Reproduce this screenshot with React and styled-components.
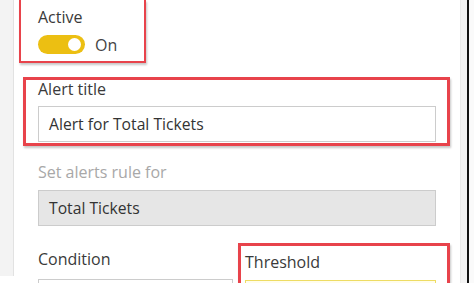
import React from "react";
import styled, { createGlobalStyle } from "styled-components";

const Global = createGlobalStyle`
  html, body { margin: 0; padding: 0; background: #ffffff; overflow: hidden; }
  body { font-family: "Open Sans", "Noto Sans", sans-serif; }
  * { box-sizing: border-box; }
`;

const RED = "#e8434b";

const Page = styled.div`
  display: flex;
  width: 474px;
  height: 283px;
  overflow: hidden;
  background: #ffffff;
`;

const LeftRail = styled.div`
  width: 14px;
  height: 276px;
  flex: none;
  background: #f3f3f3;
  border-right: 1px solid #e2e2e2;
`;

const Panel = styled.div`
  flex: 1;
  display: flex;
  flex-direction: column;
  align-items: flex-start;
  min-width: 0;
  & > * { flex-shrink: 0; }
`;

const RightRail = styled.div`
  width: 7px;
  flex: none;
  background: #f4f4f4;
  border-left: 1px solid #ececec;
`;

const RightEdge = styled.div`
  width: 7px;
  flex: none;
  border-left: 2px solid #141414;
  background: #fafafa;
`;

const ActiveBox = styled.div`
  margin-left: 5px;
  width: 127px;
  height: 63px;
  border: 2px solid ${RED};
  border-top: none;
  box-shadow: 1px 2px 2px rgba(0, 0, 0, 0.22);
  padding: 8px 0 0 17px;
  display: flex;
  flex-direction: column;
  gap: 9px;
`;

const HighlightBox = styled.div`
  border: 3px solid ${RED};
  box-shadow: 1px 2px 2px rgba(0, 0, 0, 0.22);
  display: flex;
  flex-direction: column;
  flex-shrink: 0;
  gap: ${(p) => p.$gap}px;
  padding: ${(p) => p.$padding};
  margin: ${(p) => p.$margin};
  width: ${(p) => p.$width}px;
`;

const Label = styled.div`
  font-size: 16px;
  line-height: 18px;
  color: ${(p) => (p.$muted ? "#a8a8a8" : "#3a3a3a")};
  white-space: nowrap;
`;

const ToggleRow = styled.div`
  display: flex;
  align-items: center;
  gap: 10px;
`;

const Toggle = styled.div`
  width: 47px;
  height: 19px;
  border-radius: 10px;
  background: #ecbf12;
  display: flex;
  align-items: center;
  justify-content: flex-end;
  padding-right: 4px;
`;

const Knob = styled.div`
  width: 13px;
  height: 13px;
  border-radius: 50%;
  background: #ffffff;
`;

const ToggleText = styled.span`
  font-size: 16px;
  line-height: 18px;
  color: #444444;
`;

const Input = styled.div`
  width: ${(p) => p.$width}px;
  height: 36px;
  flex: none;
  border: 1px solid ${(p) => (p.$focus ? "#eedc63" : "#cccccc")};
  background: ${(p) => (p.$disabled ? "#e6e6e6" : p.$focus ? "#fffdec" : "#ffffff")};
  padding-left: 10px;
  display: flex;
  align-items: center;
  font-size: 15.7px;
  color: #333333;
  white-space: nowrap;
`;

const Field = styled.div`
  display: flex;
  flex-direction: column;
  flex-shrink: 0;
  gap: ${(p) => p.$gap}px;
  margin: ${(p) => p.$margin};
`;

const Row = styled.div`
  display: flex;
  align-items: flex-start;
  gap: 5px;
  margin: 17px 0 0 24px;
`;

export default function App() {
  return (
    <>
      <Global />
      <Page>
        <LeftRail />
        <Panel>
          <ActiveBox>
            <Label>Active</Label>
            <ToggleRow>
              <Toggle>
                <Knob />
              </Toggle>
              <ToggleText>On</ToggleText>
            </ToggleRow>
          </ActiveBox>

          <HighlightBox $margin="14px 0 0 9px" $width={427} $padding="0 11px 1px 12px" $gap={8}>
            <Label>Alert title</Label>
            <Input $width={398}>Alert for Total Tickets</Input>
          </HighlightBox>

          <Field $gap={9} $margin="17px 0 0 24px">
            <Label $muted>Set alerts rule for</Label>
            <Input $width={398} $disabled>Total Tickets</Input>
          </Field>

          <Row>
            <Field $gap={11} $margin="7px 0 0 0">
              <Label>Condition</Label>
              <Input $width={195} />
            </Field>
            <HighlightBox $margin="0" $width={212} $padding="7px 11px 0 4px" $gap={9}>
              <Label>Threshold</Label>
              <Input $width={191} $focus />
            </HighlightBox>
          </Row>
        </Panel>
        <RightRail />
        <RightEdge />
      </Page>
    </>
  );
}
